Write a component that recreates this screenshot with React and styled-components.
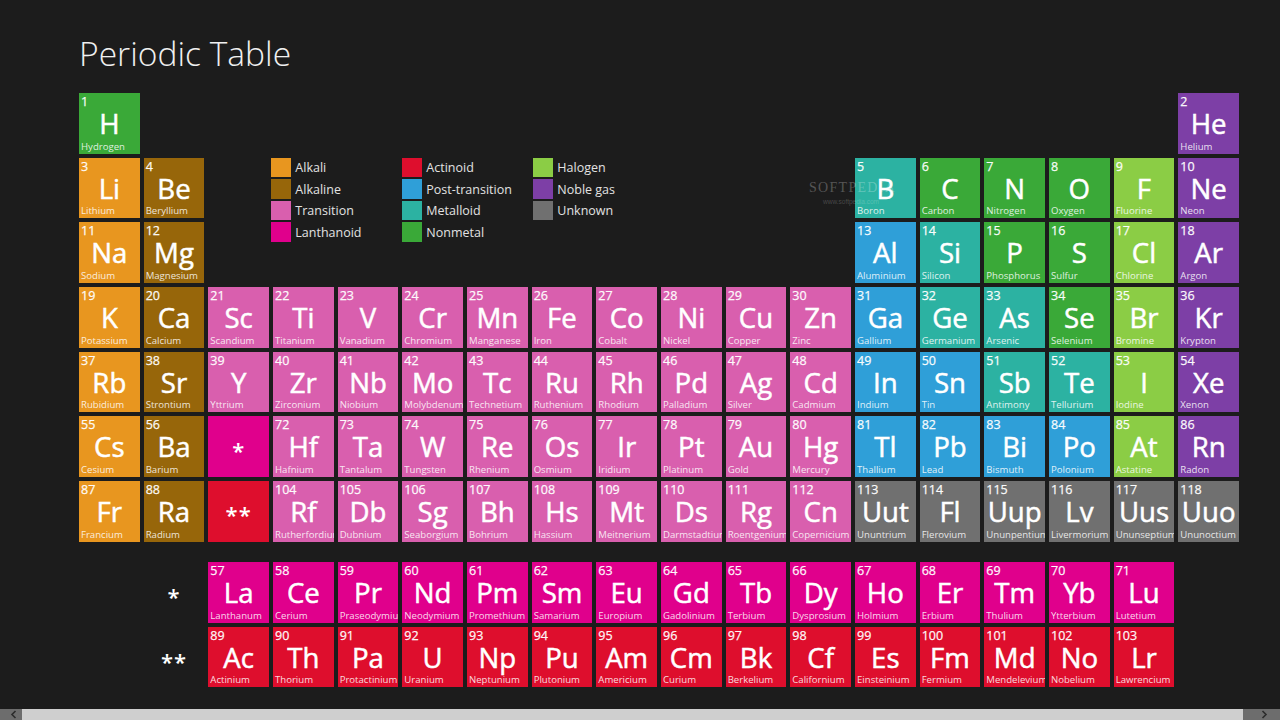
import React from "react";
import styled, { createGlobalStyle } from "styled-components";

const COLORS = {
  alkali: "#e8961f", alkaline: "#97660a", transition: "#d95fae", lanthanoid: "#e0008c",
  actinoid: "#de0e2d", post: "#2f9fd8", metalloid: "#2cb2a2", nonmetal: "#3aa938",
  halogen: "#8bcd45", noble: "#7d3fa6", unknown: "#707070",
};

const parse = (kind, text) => text.split(" ").map((t) => {
  const [n, s, name] = t.split(":");
  return { n, s, name, kind };
});

const TABLE = [
  [[1, "nonmetal", "1:H:Hydrogen"], [18, "noble", "2:He:Helium"]],
  [[1, "alkali", "3:Li:Lithium"], [2, "alkaline", "4:Be:Beryllium"], [13, "metalloid", "5:B:Boron"], [14, "nonmetal", "6:C:Carbon 7:N:Nitrogen 8:O:Oxygen"], [17, "halogen", "9:F:Fluorine"], [18, "noble", "10:Ne:Neon"]],
  [[1, "alkali", "11:Na:Sodium"], [2, "alkaline", "12:Mg:Magnesium"], [13, "post", "13:Al:Aluminium"], [14, "metalloid", "14:Si:Silicon"], [15, "nonmetal", "15:P:Phosphorus 16:S:Sulfur"], [17, "halogen", "17:Cl:Chlorine"], [18, "noble", "18:Ar:Argon"]],
  [[1, "alkali", "19:K:Potassium"], [2, "alkaline", "20:Ca:Calcium"], [3, "transition", "21:Sc:Scandium 22:Ti:Titanium 23:V:Vanadium 24:Cr:Chromium 25:Mn:Manganese 26:Fe:Iron 27:Co:Cobalt 28:Ni:Nickel 29:Cu:Copper 30:Zn:Zinc"], [13, "post", "31:Ga:Gallium"], [14, "metalloid", "32:Ge:Germanium 33:As:Arsenic"], [16, "nonmetal", "34:Se:Selenium"], [17, "halogen", "35:Br:Bromine"], [18, "noble", "36:Kr:Krypton"]],
  [[1, "alkali", "37:Rb:Rubidium"], [2, "alkaline", "38:Sr:Strontium"], [3, "transition", "39:Y:Yttrium 40:Zr:Zirconium 41:Nb:Niobium 42:Mo:Molybdenum 43:Tc:Technetium 44:Ru:Ruthenium 45:Rh:Rhodium 46:Pd:Palladium 47:Ag:Silver 48:Cd:Cadmium"], [13, "post", "49:In:Indium 50:Sn:Tin"], [15, "metalloid", "51:Sb:Antimony 52:Te:Tellurium"], [17, "halogen", "53:I:Iodine"], [18, "noble", "54:Xe:Xenon"]],
  [[1, "alkali", "55:Cs:Cesium"], [2, "alkaline", "56:Ba:Barium"], [3, "lanthanoid", ":*:"], [4, "transition", "72:Hf:Hafnium 73:Ta:Tantalum 74:W:Tungsten 75:Re:Rhenium 76:Os:Osmium 77:Ir:Iridium 78:Pt:Platinum 79:Au:Gold 80:Hg:Mercury"], [13, "post", "81:Tl:Thallium 82:Pb:Lead 83:Bi:Bismuth 84:Po:Polonium"], [17, "halogen", "85:At:Astatine"], [18, "noble", "86:Rn:Radon"]],
  [[1, "alkali", "87:Fr:Francium"], [2, "alkaline", "88:Ra:Radium"], [3, "actinoid", ":**:"], [4, "transition", "104:Rf:Rutherfordium 105:Db:Dubnium 106:Sg:Seaborgium 107:Bh:Bohrium 108:Hs:Hassium 109:Mt:Meitnerium 110:Ds:Darmstadtium 111:Rg:Roentgenium 112:Cn:Copernicium"], [13, "unknown", "113:Uut:Ununtrium 114:Fl:Flerovium 115:Uup:Ununpentium 116:Lv:Livermorium 117:Uus:Ununseptium 118:Uuo:Ununoctium"]],
];

const SERIES = [
  ["*", "lanthanoid", "57:La:Lanthanum 58:Ce:Cerium 59:Pr:Praseodymium 60:Nd:Neodymium 61:Pm:Promethium 62:Sm:Samarium 63:Eu:Europium 64:Gd:Gadolinium 65:Tb:Terbium 66:Dy:Dysprosium 67:Ho:Holmium 68:Er:Erbium 69:Tm:Thulium 70:Yb:Ytterbium 71:Lu:Lutetium"],
  ["**", "actinoid", "89:Ac:Actinium 90:Th:Thorium 91:Pa:Protactinium 92:U:Uranium 93:Np:Neptunium 94:Pu:Plutonium 95:Am:Americium 96:Cm:Curium 97:Bk:Berkelium 98:Cf:Californium 99:Es:Einsteinium 100:Fm:Fermium 101:Md:Mendelevium 102:No:Nobelium 103:Lr:Lawrencium"],
];

const LEGEND = [
  [["alkali", "Alkali"], ["alkaline", "Alkaline"], ["transition", "Transition"], ["lanthanoid", "Lanthanoid"]],
  [["actinoid", "Actinoid"], ["post", "Post-transition"], ["metalloid", "Metalloid"], ["nonmetal", "Nonmetal"]],
  [["halogen", "Halogen"], ["noble", "Noble gas"], ["unknown", "Unknown"]],
];

const Global = createGlobalStyle`
  html, body { margin: 0; height: 100%; background: #1c1c1c; overflow: hidden; }
  body { font-family: "Open Sans", "Noto Sans", "Liberation Sans", sans-serif; }
`;

const Page = styled.div`
  width: 1280px;
  height: 720px;
  display: flex;
  flex-direction: column;
  background: #1c1c1c;
  color: #fff;
  position: relative;
  overflow: hidden;
`;

const Content = styled.main`
  flex: 1;
  padding: 29px 41px 0 79px;
`;

const Title = styled.h1`
  margin: 0 0 15px;
  height: 49px;
  font-size: 33.6px;
  line-height: 49px;
  font-weight: 300;
  color: #f0f0f0;
`;

const Grid = styled.div`
  display: grid;
  grid-template-columns: repeat(18, 1fr);
  grid-auto-rows: 60.7px;
  column-gap: 4px;
  row-gap: 4px;
  position: relative;
`;

const SeriesGrid = styled(Grid)`
  margin-top: 20px;
`;

const Cell = styled.div`
  grid-column-start: ${(p) => p.$col};
  grid-row-start: ${(p) => p.$row};
  background: ${(p) => COLORS[p.$kind]};
  position: relative;
  overflow: hidden;
  display: flex;
  align-items: center;
  justify-content: center;
  min-width: 0;
`;

const Num = styled.span`
  position: absolute;
  top: 1px;
  left: 2px;
  font-size: 12.5px;
  font-weight: 400;
  -webkit-text-stroke: 0.25px #fff;
  line-height: 16px;
  color: rgba(255, 255, 255, 0.95);
`;

const Sym = styled.span`
  font-size: 27.6px;
  line-height: 1;
  font-weight: 400;
  -webkit-text-stroke: 0.5px #fff;
  color: #fff;
  white-space: nowrap;
  margin-top: 1px;
`;

const Star = styled.span`
  font-size: 22px;
  font-weight: 600;
  line-height: 1;
  letter-spacing: 1px;
  margin-top: 6px;
  color: #fff;
`;

const Name = styled.span`
  position: absolute;
  left: 2px;
  bottom: 1px;
  font-size: 9.6px;
  line-height: 13px;
  white-space: nowrap;
  color: rgba(255, 255, 255, 0.85);
`;

const SeriesLabel = styled.div`
  grid-column-start: 2;
  grid-row-start: ${(p) => p.$row};
  display: flex;
  align-items: center;
  justify-content: center;
  font-size: 22px;
  font-weight: 600;
  letter-spacing: 1px;
  padding-top: 8px;
  color: #fff;
`;

const Legend = styled.div`
  grid-column: 3 / 13;
  grid-row: 2 / 4;
  display: grid;
  grid-template-columns: repeat(3, 131px);
  padding-left: 63px;
  align-content: start;
`;

const LegendCol = styled.div`
  display: flex;
  flex-direction: column;
  gap: 2px;
`;

const LegendRow = styled.div`
  display: flex;
  align-items: center;
  gap: 4.5px;
  height: 19.5px;
  font-size: 12.5px;
  color: #e2e2e2;
`;

const LegendLabel = styled.span`
  margin-top: 1px;
`;

const Swatch = styled.span`
  width: 19.5px;
  height: 19.5px;
  flex: none;
  background: ${(p) => COLORS[p.$kind]};
`;

const Watermark = styled.div`
  position: absolute;
  left: 809px;
  top: 180px;
  width: 120px;
  font-family: "Liberation Serif", serif;
  color: rgba(255, 255, 255, 0.26);
  pointer-events: none;
`;

const WatermarkName = styled.div`
  font-size: 14px;
  line-height: 16px;
  letter-spacing: 1.3px;
`;

const WatermarkUrl = styled.div`
  font-family: "Liberation Sans", sans-serif;
  font-size: 6.5px;
  line-height: 10px;
  margin: 1px 0 0 14px;
  color: rgba(255, 255, 255, 0.2);
`;

const Scrollbar = styled.div`
  height: 11px;
  display: flex;
  flex: none;
  background: #6a6a6a;
`;

const ScrollButton = styled.div`
  width: ${(p) => p.$w}px;
  flex: none;
  display: flex;
  align-items: center;
  justify-content: flex-start;
  padding-left: ${(p) => p.$pad}px;
  box-sizing: border-box;
  background: #6d6d6d;
`;

const Thumb = styled.div`
  flex: 1;
  background: #cfcfcf;
`;

const ChevronIcon = styled.svg`
  flex: none;
`;

const Chevron = ({ dir }) => (
  <ChevronIcon width="7" height="9" viewBox="0 0 7 9">
    <path d={dir === "l" ? "M5.5 1 L2 4.5 L5.5 8" : "M1.5 1 L5 4.5 L1.5 8"} fill="none" stroke="#2c2c2c" strokeWidth="1.6" />
  </ChevronIcon>
);

const Element = ({ el, col, row }) => (
  <Cell $col={col} $row={row} $kind={el.kind}>
    {el.n && <Num>{el.n}</Num>}
    {el.name ? <Sym>{el.s}</Sym> : <Star>{el.s}</Star>}
    {el.name && <Name>{el.name}</Name>}
  </Cell>
);

export default function App() {
  return (
    <Page>
      <Global />
      <Content>
        <Title>Periodic Table</Title>
        <Grid>
          {TABLE.flatMap((groups, r) =>
            groups.flatMap(([start, kind, text]) =>
              parse(kind, text).map((el, i) => (
                <Element key={el.s} el={el} col={start + i} row={r + 1} />
              ))
            )
          )}
          <Legend>
            {LEGEND.map((col, i) => (
              <LegendCol key={i}>
                {col.map(([kind, label]) => (
                  <LegendRow key={kind}>
                    <Swatch $kind={kind} />
                    <LegendLabel>{label}</LegendLabel>
                  </LegendRow>
                ))}
              </LegendCol>
            ))}
          </Legend>
        </Grid>
        <SeriesGrid>
          {SERIES.flatMap(([label, kind, text], r) => [
            <SeriesLabel key={label} $row={r + 1}>{label}</SeriesLabel>,
            ...parse(kind, text).map((el, i) => (
              <Element key={el.s} el={el} col={3 + i} row={r + 1} />
            )),
          ])}
        </SeriesGrid>
      </Content>
      <Watermark>
        <WatermarkName>SOFTPEDIA</WatermarkName>
        <WatermarkUrl>www.softpedia.com</WatermarkUrl>
      </Watermark>
      <Scrollbar>
        <ScrollButton $w={22} $pad={10}><Chevron dir="l" /></ScrollButton>
        <Thumb />
        <ScrollButton $w={37} $pad={18}><Chevron dir="r" /></ScrollButton>
      </Scrollbar>
    </Page>
  );
}
